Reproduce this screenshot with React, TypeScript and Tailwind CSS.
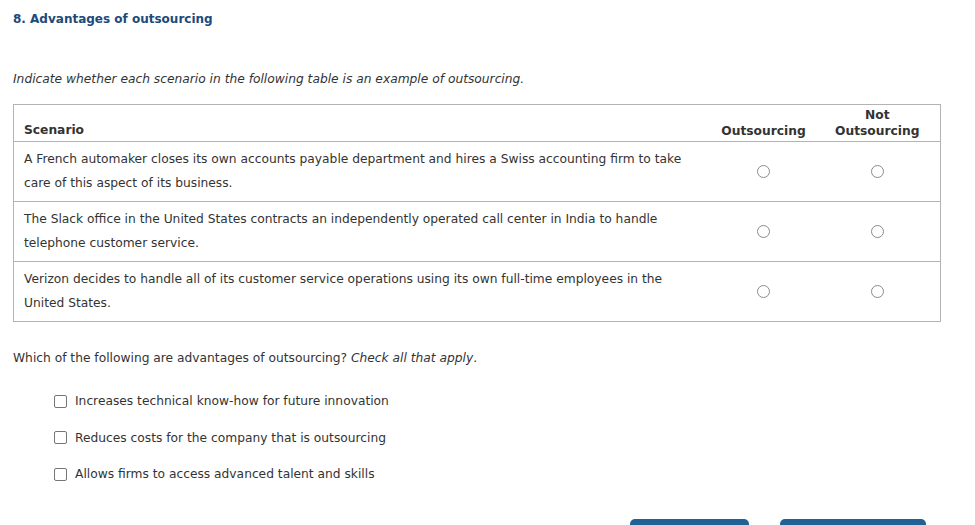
import React from 'react';

const rows = [
  {
    text: 'A French automaker closes its own accounts payable department and hires a Swiss accounting firm to take care of this aspect of its business.',
  },
  {
    text: 'The Slack office in the United States contracts an independently operated call center in India to handle telephone customer service.',
  },
  {
    text: 'Verizon decides to handle all of its customer service operations using its own full-time employees in the United States.',
  },
];

const options = [
  'Increases technical know-how for future innovation',
  'Reduces costs for the company that is outsourcing',
  'Allows firms to access advanced talent and skills',
];

const Radio: React.FC = () => (
  <span className="inline-block w-[13px] h-[13px] rounded-full border border-[#8a8a8a] bg-white" />
);

export default function App() {
  return (
    <div className="w-[975px] h-[525px] overflow-hidden bg-white text-[#333] font-['DejaVu_Sans',Verdana,sans-serif] text-[12.25px] relative">
      <div className="px-[13px] pt-[10px]">
        <h2 className="text-[12px] font-bold text-[#1d4a7a] leading-[18px]">8. Advantages of outsourcing</h2>

        <p className="mt-[42px] italic leading-[18px]">
          Indicate whether each scenario in the following table is an example of outsourcing.
        </p>

        <table className="mt-[16px] w-[928px] border-collapse border border-[#b3b3b3]">
          <thead>
            <tr className="h-[37px]">
              <th className="text-left align-bottom font-bold px-[10px] pb-[2px]">Scenario</th>
              <th className="w-[102px] text-center align-bottom font-bold pb-[2px] leading-[16px]">Outsourcing</th>
              <th className="w-[126px] text-center align-bottom font-bold pb-[2px] leading-[16px]">
                Not
                <br />
                Outsourcing
              </th>
            </tr>
          </thead>
          <tbody>
            {rows.map((r, i) => (
              <tr key={i} className="h-[59px] border-t border-[#b3b3b3]">
                <td className="px-[10px] pt-[5px] pb-[6px] leading-[24px] align-top">
                  <div className="w-[670px]">{r.text}</div>
                </td>
                <td className="text-center align-middle pt-[5px]">
                  <Radio />
                </td>
                <td className="text-center align-middle pt-[5px]">
                  <Radio />
                </td>
              </tr>
            ))}
          </tbody>
        </table>

        <p className="mt-[27px] leading-[18px]">
          Which of the following are advantages of outsourcing? <span className="italic">Check all that apply</span>.
        </p>

        <div className="mt-[25px] pl-[41px] flex flex-col gap-[18.5px]">
          {options.map((o) => (
            <label key={o} className="flex items-center gap-[8px] leading-[18px]">
              <span className="inline-block w-[13px] h-[13px] rounded-[2px] border border-[#767676] bg-white" />
              <span>{o}</span>
            </label>
          ))}
        </div>
      </div>

      <div className="absolute top-[519px] left-[630px] flex gap-[31px]">
        <div className="w-[119px] h-[20px] rounded-[5px] bg-[#1f6396]" />
        <div className="w-[146px] h-[20px] rounded-[5px] bg-[#1f6396]" />
      </div>
    </div>
  );
}
